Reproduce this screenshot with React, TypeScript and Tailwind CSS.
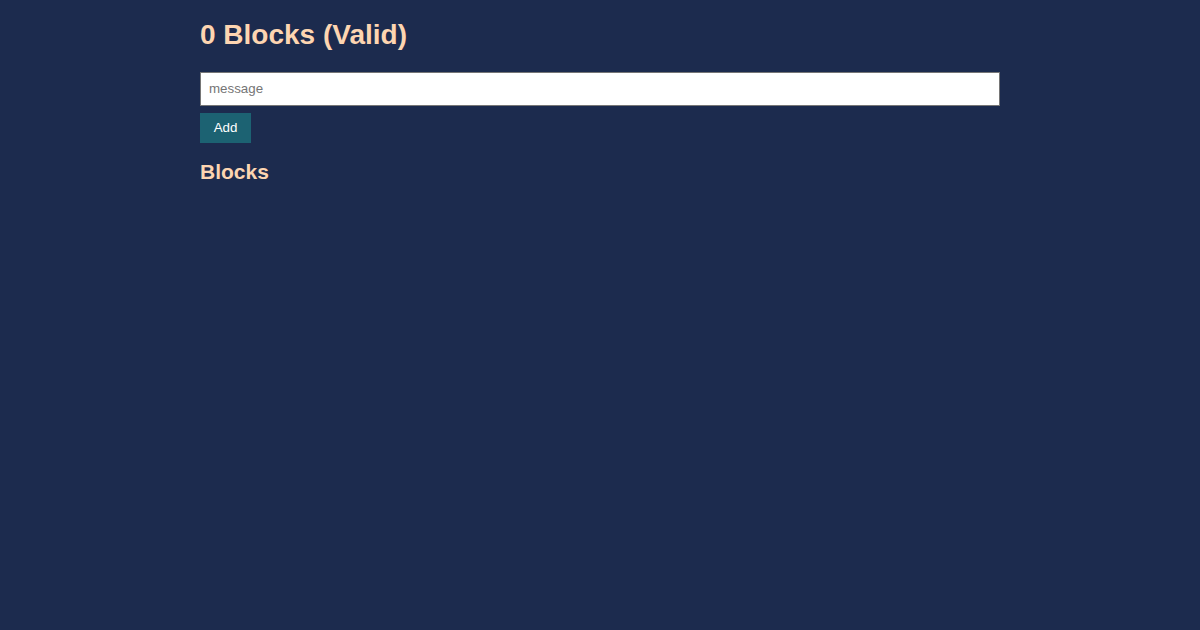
export default function App() {
  return (
    <div className="min-h-[630px] w-full bg-[#1c2b4e] font-['Liberation_Sans',Arial,sans-serif]">
      <div className="mx-auto w-[800px] pt-[19px]">
        <h1 className="m-0 text-[28px] font-bold leading-[32px] text-[#fdd5b1]">0 Blocks (Valid)</h1>
        <input
          type="text"
          placeholder="message"
          className="mt-[21px] block h-[34px] w-[800px] border border-[#767676] bg-white px-[8px] pb-[2px] text-[13.33px] text-black outline-none placeholder:text-[#757575]"
        />
        <button className="mt-[7px] flex h-[30px] w-[51px] items-center justify-center bg-[#1c6272] text-[13.33px] text-white">
          Add
        </button>
        <h2 className="mt-[17px] m-0 text-[21px] font-bold leading-[24px] text-[#fdd5b1]">Blocks</h2>
      </div>
    </div>
  );
}
